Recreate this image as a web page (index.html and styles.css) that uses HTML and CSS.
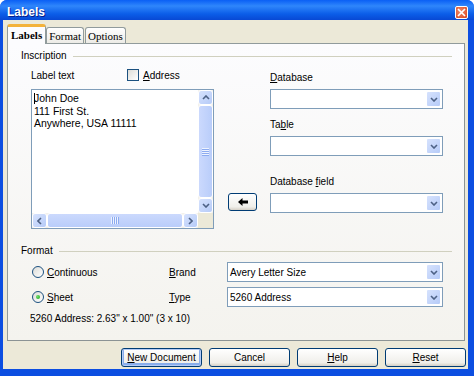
FILE: index.html
```html
<!DOCTYPE html>
<html lang="en">
<head>
    <meta charset="UTF-8">
    <title>Labels</title>
    <link rel="stylesheet" href="styles.css">
</head>
<body>
<div class="window">
    <div class="titlebar">
        <span class="title">Labels</span>
        <span class="close-btn">
            <svg width="9" height="9" viewBox="0 0 9 9"><path d="M1 1 L8 8 M8 1 L1 8" stroke="#fff" stroke-width="1.7"/></svg>
        </span>
    </div>

    <div class="client">
        <div class="tabs">
            <div class="tab active">Labels</div>
            <div class="tab">Format</div>
            <div class="tab">Options</div>
        </div>

        <div class="panel">
            <div class="group-head">Inscription</div>
            <div class="inscription">
                <div class="left-col">
                    <div class="label-row">
                        <span class="lbl">Label text</span>
                        <span class="check"><span class="checkbox"></span><span><u>A</u>ddress</span></span>
                    </div>
                    <div class="textbox">
                        <div class="text"><span class="caret"></span>John Doe
111 First St.
Anywhere, USA 11111</div>
                        <div class="vscroll">
                            <span class="sb-btn"><svg width="8" height="5" viewBox="0 0 8 5"><path d="M1 4 L4 1 L7 4" stroke="#4d6185" stroke-width="1.6" fill="none"/></svg></span>
                            <span class="sb-thumb"><span class="grip-v"></span></span>
                            <span class="sb-btn"><svg width="8" height="5" viewBox="0 0 8 5"><path d="M1 1 L4 4 L7 1" stroke="#4d6185" stroke-width="1.6" fill="none"/></svg></span>
                        </div>
                        <div class="hscroll">
                            <span class="sb-btn"><svg width="5" height="8" viewBox="0 0 5 8"><path d="M4 1 L1 4 L4 7" stroke="#4d6185" stroke-width="1.6" fill="none"/></svg></span>
                            <span class="sb-thumb"><span class="grip-h"></span></span>
                            <span class="sb-btn"><svg width="5" height="8" viewBox="0 0 5 8"><path d="M1 1 L4 4 L1 7" stroke="#4d6185" stroke-width="1.6" fill="none"/></svg></span>
                        </div>
                        <div class="corner"></div>
                    </div>
                </div>

                <div class="mid-col">
                    <button class="arrow-btn"><svg width="10" height="8" viewBox="0 0 10 8"><path d="M0 4 L4.5 0 V2.5 H10 V5.5 H4.5 V8 Z" fill="#000"/></svg></button>
                </div>

                <div class="right-col">
                    <span class="field-label first"><u>D</u>atabase</span>
                    <div class="combo"><span></span><span class="drop"><svg width="8" height="5" viewBox="0 0 8 5"><path d="M1 1 L4 4 L7 1" stroke="#4d6185" stroke-width="1.6" fill="none"/></svg></span></div>
                    <span class="field-label">Ta<u>b</u>le</span>
                    <div class="combo"><span></span><span class="drop"><svg width="8" height="5" viewBox="0 0 8 5"><path d="M1 1 L4 4 L7 1" stroke="#4d6185" stroke-width="1.6" fill="none"/></svg></span></div>
                    <span class="field-label far">Database <u>f</u>ield</span>
                    <div class="combo"><span></span><span class="drop"><svg width="8" height="5" viewBox="0 0 8 5"><path d="M1 1 L4 4 L7 1" stroke="#4d6185" stroke-width="1.6" fill="none"/></svg></span></div>
                </div>
            </div>

            <div class="group-head format-head">Format</div>
            <div class="format-grid">
                <span class="radio-opt"><span class="radio"></span><span><u>C</u>ontinuous</span></span>
                <span><u>B</u>rand</span>
                <div class="combo"><span>Avery Letter Size</span><span class="drop"><svg width="8" height="5" viewBox="0 0 8 5"><path d="M1 1 L4 4 L7 1" stroke="#4d6185" stroke-width="1.6" fill="none"/></svg></span></div>

                <span class="radio-opt"><span class="radio checked"></span><span><u>S</u>heet</span></span>
                <span><u>T</u>ype</span>
                <div class="combo"><span>5260 Address</span><span class="drop"><svg width="8" height="5" viewBox="0 0 8 5"><path d="M1 1 L4 4 L7 1" stroke="#4d6185" stroke-width="1.6" fill="none"/></svg></span></div>
            </div>
            <div class="info">5260 Address: 2.63" x 1.00" (3 x 10)</div>
        </div>

        <div class="buttons">
            <button class="btn default"><u>N</u>ew Document</button>
            <button class="btn">Cancel</button>
            <button class="btn"><u>H</u>elp</button>
            <button class="btn"><u>R</u>eset</button>
        </div>
    </div>
</div>
</body>
</html>
```

FILE: styles.css
```css
body {
    margin: 0;
    font-family: "Liberation Sans", Arial, sans-serif;
    font-size: 10px;
    color: #000;
}

/* window frame */
.window {
    width: 474px;
    height: 376px;
    display: flex;
    flex-direction: column;
    background: #0c4ee1;
    border-radius: 7px 7px 0 0;
    overflow: hidden;
}
.titlebar {
    height: 20px;
    box-sizing: border-box;
    padding: 4px 6px 0 7px;
    display: flex;
    align-items: center;
    justify-content: space-between;
    background: linear-gradient(#0a5ff5, #2f86fb 30%, #0b5de8 70%, #0848d4);
}
.title {
    color: #fff;
    font-weight: bold;
    font-size: 12px;
    text-shadow: 1px 1px #0a1f8b;
}
.close-btn {
    width: 13px;
    height: 13px;
    box-sizing: border-box;
    border: 1px solid #fff;
    border-radius: 2px;
    background: radial-gradient(circle at 40% 40%, #f08a6a, #d8441d);
    display: flex;
    align-items: center;
    justify-content: center;
}
.client {
    flex: 1;
    margin: 0 6px 7px 3px;
    padding: 4px 2px 2px 4px;
    background: #ece9d8;
    display: flex;
    flex-direction: column;
}

/* tabs */
.tabs {
    display: flex;
    align-items: flex-end;
    height: 19px;
}
.tab {
    height: 15px;
    padding: 0 2px;
    border: 1px solid #919b9c;
    border-bottom: none;
    border-radius: 3px 3px 0 0;
    background: linear-gradient(#fff, #ecebe6);
    font-family: "Liberation Serif", "Times New Roman", serif;
    font-size: 11px;
    line-height: 16px;
}
.tab.active {
    height: 17px;
    padding: 0 3px;
    border-top: 3px solid #f3b23a;
    margin-bottom: -1px;
    background: #fcfcfe;
    font-weight: bold;
    position: relative;
    z-index: 1;
}
.tab:last-child {
    margin-left: 1px;
}
.panel {
    height: 298px;
    box-sizing: border-box;
    margin-right: 1px;
    border: 1px solid #919b9c;
    border-right-color: #8b9394;
    border-bottom-color: #8b9394;
    background: linear-gradient(#fcfcfe, #f4f3ee);
    padding: 6px 12px 0 13px;
}

/* group headers */
.group-head {
    display: flex;
    align-items: center;
    gap: 6px;
    height: 12px;
    line-height: 12px;
}
.group-head::after {
    content: "";
    flex: 1;
    border-top: 1px solid #d0d0bf;
}
.format-head {
    margin-top: 16px;
}

/* inscription */
.inscription {
    display: flex;
    margin: 6px 0 0 10px;
}
.left-col {
    width: 183px;
}
.label-row {
    display: flex;
    align-items: center;
    height: 14px;
}
.lbl {
    width: 96px;
}
.check {
    display: flex;
    align-items: center;
    gap: 4px;
}
.checkbox {
    width: 12px;
    height: 12px;
    box-sizing: border-box;
    border: 1px solid #1c5180;
    background: linear-gradient(135deg, #dcdcd7, #fff);
}
.textbox {
    margin-top: 7px;
    height: 140px;
    box-sizing: border-box;
    border: 1px solid #7f9db9;
    background: #fff;
    display: grid;
    grid-template-columns: 1fr 15px;
    grid-template-rows: 1fr 15px;
}
.text {
    padding: 2px 2px;
    line-height: 12.7px;
    font-size: 10.5px;
    white-space: pre;
}
.caret {
    display: inline-block;
    width: 1px;
    height: 11px;
    margin-right: -1px;
    background: #000;
    vertical-align: -2px;
}

/* scrollbars */
.vscroll, .hscroll {
    display: flex;
    background: #f3f1ec;
}
.vscroll {
    flex-direction: column;
}
.sb-btn {
    width: 15px;
    height: 15px;
    flex: none;
    box-sizing: border-box;
    border: 1px solid #fff;
    border-radius: 3px;
    background: linear-gradient(135deg, #d6e2fd, #b6cbf8);
    display: flex;
    align-items: center;
    justify-content: center;
}
.sb-thumb {
    flex: 1;
    box-sizing: border-box;
    border: 1px solid #fff;
    border-radius: 3px;
    display: flex;
    align-items: center;
    justify-content: center;
}
.vscroll .sb-thumb {
    background: linear-gradient(to right, #cbd9fd, #b9cdfa);
}
.hscroll .sb-thumb {
    background: linear-gradient(#cbd9fd, #b9cdfa);
}
.grip-v {
    width: 7px;
    height: 8px;
    background: repeating-linear-gradient(#eef3fe 0 1px, #8cabf0 1px 2px);
}
.grip-h {
    width: 8px;
    height: 7px;
    background: repeating-linear-gradient(to right, #eef3fe 0 1px, #8cabf0 1px 2px);
}
.corner {
    background: #ece9d8;
}

/* middle arrow */
.mid-col {
    margin: 125px 13px 0 14px;
}
.arrow-btn {
    width: 29px;
    height: 18px;
    padding: 0;
    border: 1px solid #003c74;
    border-radius: 3px;
    background: linear-gradient(#fff, #f0efea 80%, #d6d0c5);
    display: flex;
    align-items: center;
    justify-content: center;
}

/* right column */
.right-col {
    width: 173px;
    display: flex;
    flex-direction: column;
}
.field-label {
    height: 12px;
    line-height: 12px;
    margin-top: 10px;
}
.field-label.first {
    margin-top: 4px;
}
.field-label.far {
    margin-top: 20px;
}
.combo {
    height: 20px;
    box-sizing: border-box;
    border: 1px solid #7f9db9;
    background: #fff;
    display: flex;
    align-items: center;
    justify-content: space-between;
    padding: 0 1px 0 2px;
}
.right-col .combo {
    margin-top: 5px;
}
.drop {
    width: 15px;
    height: 16px;
    box-sizing: border-box;
    border: 1px solid #fff;
    border-radius: 2px;
    background: linear-gradient(135deg, #d6e2fd, #b6cbf8);
    display: flex;
    align-items: center;
    justify-content: center;
}

/* format */
.format-grid {
    display: grid;
    grid-template-columns: 137px 58px 216px;
    grid-auto-rows: 20px;
    row-gap: 5px;
    align-items: center;
    margin: 5px 0 0 11px;
}
.radio-opt {
    display: flex;
    align-items: center;
    gap: 3px;
}
.radio {
    width: 12px;
    height: 12px;
    box-sizing: border-box;
    border: 1px solid #1c5180;
    border-radius: 50%;
    background: linear-gradient(135deg, #dcdcd7, #fff);
    display: flex;
    align-items: center;
    justify-content: center;
}
.radio.checked::after {
    content: "";
    width: 4px;
    height: 4px;
    border-radius: 50%;
    background: radial-gradient(circle at 35% 35%, #6fe06b, #21a121);
}
.info {
    margin: 6px 0 0 9px;
    line-height: 12px;
}

/* dialog buttons */
.buttons {
    display: flex;
    justify-content: flex-end;
    gap: 7px;
    margin-top: 7px;
}
.btn {
    width: 81px;
    height: 19px;
    padding: 0;
    border: 1px solid #003c74;
    border-radius: 3px;
    background: linear-gradient(#fff, #f0efea 80%, #d6d0c5);
    font: inherit;
    color: #000;
}
.btn.default {
    box-shadow: inset 0 0 0 1px #b4cbf5, inset 0 -1px 0 2px #89adeb;
}
```
